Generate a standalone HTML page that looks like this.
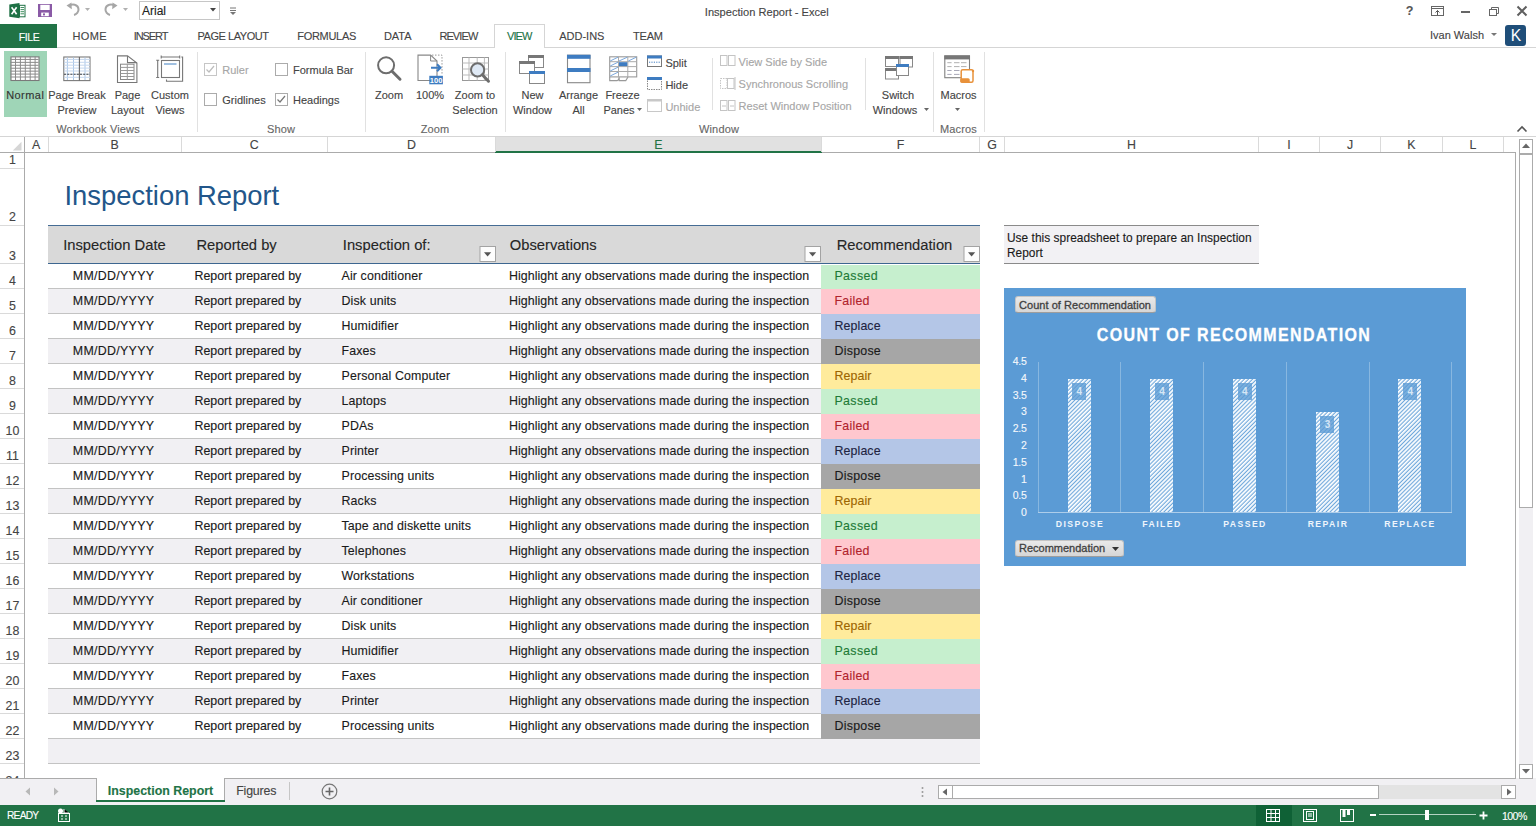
<!DOCTYPE html><html><head><meta charset="utf-8"><style>
html,body{margin:0;padding:0}
body{width:1536px;height:826px;position:relative;overflow:hidden;background:#fff;font-family:"Liberation Sans",sans-serif}
.t{position:absolute;white-space:nowrap;-webkit-text-stroke:0.12px currentColor}
.r{position:absolute}
</style></head><body>
<svg class="r" style="left:8px;top:2px" width="20" height="18" viewBox="0 0 20 18"><path d="M1.3 2.6 L11.5 1 L11.5 16.2 L1.3 14.8 Z" fill="#1e7145"/><rect x="11.5" y="3.3" width="5.5" height="11.5" fill="#fff" stroke="#1e7145" stroke-width="1"/><path d="M12.5 5.5h3.5M12.5 7.6h3.5M12.5 9.7h3.5M12.5 11.8h3.5" stroke="#3f8f5f" stroke-width="1"/><path d="M3.6 5.2L8.6 12.3M8.6 5.2L3.6 12.3" stroke="#fff" stroke-width="1.6"/></svg>
<svg class="r" style="left:37px;top:3px" width="16" height="15" viewBox="0 0 16 15"><rect x="1" y="1" width="14" height="13" fill="#8a5aa6"/><rect x="3.3" y="1.8" width="9.4" height="5.2" fill="#fff"/><rect x="4.2" y="9.6" width="7.6" height="3.6" fill="#fff"/><rect x="6" y="10.4" width="2" height="2" fill="#8a5aa6"/></svg>
<svg class="r" style="left:64px;top:0px" width="18" height="18" viewBox="0 0 18 18"><path d="M5 6 C8 3.5, 14 4.2, 14.5 9 C14.8 12, 12.5 14.5, 10 15" fill="none" stroke="#a6a6a6" stroke-width="2"/><path d="M2.5 5.5 L7.5 2.5 L7.8 9.2 Z" fill="#a6a6a6"/></svg>
<svg class="r" style="left:85px;top:8px" width="6" height="4" viewBox="0 0 6 4"><path d="M0 0h5l-2.5 3z" fill="#b0b0b0"/></svg>
<svg class="r" style="left:102px;top:0px" width="18" height="18" viewBox="0 0 18 18"><path d="M13 6 C10 3.5, 4 4.2, 3.5 9 C3.2 12, 5.5 14.5, 8 15" fill="none" stroke="#a6a6a6" stroke-width="2"/><path d="M15.5 5.5 L10.5 2.5 L10.2 9.2 Z" fill="#a6a6a6"/></svg>
<svg class="r" style="left:123px;top:8px" width="6" height="4" viewBox="0 0 6 4"><path d="M0 0h5l-2.5 3z" fill="#b0b0b0"/></svg>
<div class="r" style="left:139px;top:1px;width:81px;height:19px;border:1px solid #c6c6c6;background:#fff;box-sizing:border-box"></div>
<div class="t" style="left:142.00px;top:2.84px;font-size:12px;line-height:16px;color:#222;">Arial</div>
<svg class="r" style="left:210px;top:8px" width="7" height="4" viewBox="0 0 7 4"><path d="M0 0h6l-3 3.5z" fill="#444"/></svg>
<svg class="r" style="left:229px;top:6px" width="8" height="10" viewBox="0 0 8 10"><path d="M1 2h6M1 4.5h6" stroke="#777" stroke-width="1"/><path d="M1 6h6l-3 3z" fill="#777"/></svg>
<div class="t" style="left:566.80px;width:400px;text-align:center;top:5.25px;font-size:11.1px;line-height:14px;color:#444;">Inspection Report - Excel</div>
<div class="t" style="left:1209.50px;width:400px;text-align:center;top:2.87px;font-size:12.5px;line-height:16px;color:#555;font-weight:700;">?</div>
<svg class="r" style="left:1430px;top:5px" width="15" height="11" viewBox="0 0 15 11"><rect x="1.5" y="1.5" width="12" height="9" fill="none" stroke="#666" stroke-width="1"/><path d="M1.5 3.5h12" stroke="#666"/><path d="M7.5 10V5.5M5.5 7.5l2-2 2 2" stroke="#555" fill="none" stroke-width="1"/></svg>
<div class="r" style="left:1461px;top:11px;width:9px;height:2px;background:#666"></div>
<svg class="r" style="left:1488px;top:5px" width="12" height="12" viewBox="0 0 12 12"><rect x="1.5" y="4.5" width="7" height="6" fill="none" stroke="#666"/><path d="M3.5 4.5V2.5h7v6h-2" fill="none" stroke="#666"/></svg>
<svg class="r" style="left:1516px;top:5px" width="12" height="12" viewBox="0 0 12 12"><path d="M1.5 1.5l9 9M10.5 1.5l-9 9" stroke="#5f5f5f" stroke-width="2"/></svg>
<div class="r" style="left:0px;top:47px;width:1536px;height:1px;background:#d5d5d5"></div>
<div class="r" style="left:0px;top:24px;width:57px;height:24px;background:#217346"></div>
<div class="t" style="left:-171.00px;width:400px;text-align:center;top:29.56px;font-size:10.5px;line-height:14px;color:#fff;letter-spacing:-0.4px">FILE</div>
<div class="t" style="left:72.60px;top:29.19px;font-size:11px;line-height:14px;color:#444;letter-spacing:0.3px">HOME</div>
<div class="t" style="left:133.80px;top:29.19px;font-size:11px;line-height:14px;color:#444;letter-spacing:-1.1px">INSERT</div>
<div class="t" style="left:197.50px;top:29.19px;font-size:11px;line-height:14px;color:#444;letter-spacing:-0.45px">PAGE LAYOUT</div>
<div class="t" style="left:297.20px;top:29.19px;font-size:11px;line-height:14px;color:#444;letter-spacing:-0.28px">FORMULAS</div>
<div class="t" style="left:383.90px;top:29.19px;font-size:11px;line-height:14px;color:#444;letter-spacing:0px">DATA</div>
<div class="t" style="left:559.20px;top:29.19px;font-size:11px;line-height:14px;color:#444;letter-spacing:0px">ADD-INS</div>
<div class="t" style="left:633.00px;top:29.19px;font-size:11px;line-height:14px;color:#444;letter-spacing:-0.2px">TEAM</div>
<div class="t" style="left:439.40px;top:29.19px;font-size:11px;line-height:14px;color:#444;letter-spacing:-0.9px">REVIEW</div>
<div class="r" style="left:494px;top:24px;width:51px;height:24px;background:#fff;border:1px solid #d5d5d5;border-bottom:none;box-sizing:border-box"></div>
<div class="t" style="left:319.30px;width:400px;text-align:center;top:29.19px;font-size:11px;line-height:14px;color:#217346;letter-spacing:-0.9px">VIEW</div>
<div class="t" style="left:1430.00px;top:28.19px;font-size:11px;line-height:14px;color:#444;">Ivan Walsh</div>
<svg class="r" style="left:1491px;top:33px" width="7" height="4" viewBox="0 0 7 4"><path d="M0 0h6l-3 3z" fill="#777"/></svg>
<div class="r" style="left:1505px;top:25px;width:21px;height:21px;background:#1f4e79;border-radius:3px"></div>
<div class="t" style="left:1315.60px;width:400px;text-align:center;top:25.41px;font-size:17px;line-height:22px;color:#fff;-webkit-text-stroke:0;transform:scaleX(0.92)">K</div>
<div class="r" style="left:0px;top:136px;width:1536px;height:1px;background:#d5d5d5"></div>
<div class="r" style="left:197px;top:52px;width:1px;height:80px;background:#e1e1e1"></div>
<div class="r" style="left:365px;top:52px;width:1px;height:80px;background:#e1e1e1"></div>
<div class="r" style="left:505px;top:52px;width:1px;height:80px;background:#e1e1e1"></div>
<div class="r" style="left:933px;top:52px;width:1px;height:80px;background:#e1e1e1"></div>
<div class="r" style="left:984px;top:52px;width:1px;height:80px;background:#e1e1e1"></div>
<div class="r" style="left:712px;top:58px;width:1px;height:52px;background:#e1e1e1"></div>
<div class="r" style="left:865px;top:58px;width:1px;height:52px;background:#e1e1e1"></div>
<div class="t" style="left:-102.00px;width:400px;text-align:center;top:122.19px;font-size:11px;line-height:14px;color:#666;letter-spacing:0.15px">Workbook Views</div>
<div class="t" style="left:81.00px;width:400px;text-align:center;top:122.19px;font-size:11px;line-height:14px;color:#666;letter-spacing:0.15px">Show</div>
<div class="t" style="left:235.00px;width:400px;text-align:center;top:122.19px;font-size:11px;line-height:14px;color:#666;letter-spacing:0.15px">Zoom</div>
<div class="t" style="left:519.00px;width:400px;text-align:center;top:122.19px;font-size:11px;line-height:14px;color:#666;letter-spacing:0.15px">Window</div>
<div class="t" style="left:758.50px;width:400px;text-align:center;top:122.19px;font-size:11px;line-height:14px;color:#666;letter-spacing:0.15px">Macros</div>
<svg class="r" style="left:1516px;top:125px" width="12" height="8" viewBox="0 0 12 8"><path d="M1.5 6.5L6 2l4.5 4.5" fill="none" stroke="#555" stroke-width="1.6"/></svg>
<div class="r" style="left:4px;top:51px;width:43px;height:66px;background:#9fd5b7"></div>
<div class="t" style="left:-174.80px;width:400px;text-align:center;top:87.79px;font-size:11px;line-height:14px;color:#333;letter-spacing:0.45px">Normal</div>
<div class="t" style="left:-123.00px;width:400px;text-align:center;top:87.79px;font-size:11px;line-height:14px;color:#444;">Page Break</div>
<div class="t" style="left:-123.00px;width:400px;text-align:center;top:102.89px;font-size:11px;line-height:14px;color:#444;">Preview</div>
<div class="t" style="left:-72.50px;width:400px;text-align:center;top:87.79px;font-size:11px;line-height:14px;color:#444;">Page</div>
<div class="t" style="left:-72.50px;width:400px;text-align:center;top:102.89px;font-size:11px;line-height:14px;color:#444;">Layout</div>
<div class="t" style="left:-30.00px;width:400px;text-align:center;top:87.79px;font-size:11px;line-height:14px;color:#444;">Custom</div>
<div class="t" style="left:-30.00px;width:400px;text-align:center;top:102.89px;font-size:11px;line-height:14px;color:#444;">Views</div>
<svg class="r" style="left:10px;top:56px" width="30" height="26" viewBox="0 0 30 26"><rect x="1" y="0.9" width="28" height="23.6" fill="#fff" stroke="#7a7a7a" stroke-width="1.1"/><path d="M5.50 0.5V24" stroke="#8a8a8a" stroke-width="1"/><path d="M10.40 0.5V24" stroke="#8a8a8a" stroke-width="1"/><path d="M15.30 0.5V24" stroke="#8a8a8a" stroke-width="1"/><path d="M20.20 0.5V24" stroke="#8a8a8a" stroke-width="1"/><path d="M25.10 0.5V24" stroke="#8a8a8a" stroke-width="1"/><path d="M0.5 3.43H28.5" stroke="#8a8a8a" stroke-width="1"/><path d="M0.5 6.36H28.5" stroke="#8a8a8a" stroke-width="1"/><path d="M0.5 9.29H28.5" stroke="#8a8a8a" stroke-width="1"/><path d="M0.5 12.22H28.5" stroke="#8a8a8a" stroke-width="1"/><path d="M0.5 15.15H28.5" stroke="#8a8a8a" stroke-width="1"/><path d="M0.5 18.08H28.5" stroke="#8a8a8a" stroke-width="1"/><path d="M0.5 21.01H28.5" stroke="#8a8a8a" stroke-width="1"/></svg>
<svg class="r" style="left:63px;top:56px" width="28" height="26" viewBox="0 0 28 26"><rect x="0.8" y="1" width="26.2" height="23.6" fill="#fff" stroke="#7a7a7a" stroke-width="1.1"/><path d="M4.4 1.5V24" stroke="#a9c6e8"/><path d="M10.5 1.5V24" stroke="#a9c6e8"/><path d="M22 1.5V24" stroke="#a9c6e8"/><path d="M1 3.4H27" stroke="#c5d7ee"/><path d="M1 6.3H27" stroke="#c5d7ee"/><path d="M1 9.2H27" stroke="#c5d7ee"/><path d="M1 12.1H27" stroke="#c5d7ee"/><path d="M1 15H27" stroke="#c5d7ee"/><path d="M1 18.2H27" stroke="#c5d7ee"/><path d="M1 21.3H27" stroke="#c5d7ee"/><path d="M16.4 1V24.5" stroke="#666" stroke-width="1.1"/><path d="M1 18.3H27" stroke="#444" stroke-width="1.1" stroke-dasharray="2 1.2"/></svg>
<svg class="r" style="left:116px;top:55px" width="23" height="29" viewBox="0 0 23 29"><path d="M1.5 0.9H11.5L20.9 8V27.5H1.5Z" fill="#fff" stroke="#777" stroke-width="1.1"/><path d="M11.5 0.9V7.6H20.9" fill="none" stroke="#777" stroke-width="1.1"/><rect x="4.5" y="9.2" width="13.5" height="15.3" fill="none" stroke="#888"/><path d="M4.5 12.4h13.5M4.5 15.5h13.5M4.5 18.5h13.5M4.5 21.5h13.5M11.3 9.2v15.3" stroke="#999"/></svg>
<svg class="r" style="left:155px;top:55px" width="30" height="29" viewBox="0 0 30 29"><path d="M2.7 5.3V22.5M1.2 5.3h3M1.2 22.5h3" stroke="#777" stroke-width="1.1"/><path d="M6.2 2H24.7M6.2 0.5v3M24.7 0.5v3" stroke="#777" stroke-width="1.1"/><rect x="6.5" y="5.5" width="18" height="17" fill="#fff" stroke="#777" stroke-width="1.1"/><path d="M9 9H21.5" stroke="#9fbfe0" stroke-width="2"/><path d="M26.3 2H27.6V26.3H11.5V24.5" fill="none" stroke="#777" stroke-width="1.1"/></svg>
<svg class="r" style="left:204px;top:63px" width="13" height="13" viewBox="0 0 13 13"><rect x="0.5" y="0.5" width="12" height="12" fill="#fff" stroke="#c6c6c6"/><path d="M2.5 6.5l2.5 2.5 5-6" fill="none" stroke="#bcbcbc" stroke-width="1.2"/></svg>
<div class="t" style="left:222.30px;top:62.99px;font-size:11px;line-height:14px;color:#a6a6a6;">Ruler</div>
<svg class="r" style="left:275px;top:63px" width="13" height="13" viewBox="0 0 13 13"><rect x="0.5" y="0.5" width="12" height="12" fill="#fff" stroke="#ababab"/></svg>
<div class="t" style="left:293.00px;top:62.99px;font-size:11px;line-height:14px;color:#444;">Formula Bar</div>
<svg class="r" style="left:204px;top:93px" width="13" height="13" viewBox="0 0 13 13"><rect x="0.5" y="0.5" width="12" height="12" fill="#fff" stroke="#ababab"/></svg>
<div class="t" style="left:222.30px;top:92.79px;font-size:11px;line-height:14px;color:#444;">Gridlines</div>
<svg class="r" style="left:275px;top:93px" width="13" height="13" viewBox="0 0 13 13"><rect x="0.5" y="0.5" width="12" height="12" fill="#fff" stroke="#ababab"/><path d="M2.5 6.5l2.5 2.5 5-6" fill="none" stroke="#777" stroke-width="1.2"/></svg>
<div class="t" style="left:293.00px;top:92.79px;font-size:11px;line-height:14px;color:#444;">Headings</div>
<div class="t" style="left:189.00px;width:400px;text-align:center;top:87.79px;font-size:11px;line-height:14px;color:#444;">Zoom</div>
<div class="t" style="left:230.00px;width:400px;text-align:center;top:87.79px;font-size:11px;line-height:14px;color:#444;">100%</div>
<div class="t" style="left:275.00px;width:400px;text-align:center;top:87.79px;font-size:11px;line-height:14px;color:#444;">Zoom to</div>
<div class="t" style="left:275.00px;width:400px;text-align:center;top:102.89px;font-size:11px;line-height:14px;color:#444;">Selection</div>
<svg class="r" style="left:375px;top:55px" width="28" height="28" viewBox="0 0 28 28"><circle cx="11.1" cy="10.3" r="8" fill="none" stroke="#6d6d6d" stroke-width="2"/><path d="M17 16.3L25 24.2" stroke="#6d6d6d" stroke-width="3" stroke-linecap="round"/></svg>
<svg class="r" style="left:416px;top:54px" width="30" height="32" viewBox="0 0 30 32"><path d="M2 1.1H14.6L21 7V26.5H2Z" fill="#fff" stroke="#888" stroke-width="1.1"/><path d="M14.6 1.1V7H21" fill="none" stroke="#888"/><path d="M16 1.1h10v18.5" fill="none" stroke="#999" stroke-dasharray="1.5 1.5"/><path d="M15 13.8h9M21 10.3l3.5 3.5-3.5 3.5" stroke="#3e7cc1" stroke-width="2" fill="none"/><rect x="13.3" y="21.8" width="13.6" height="8.5" fill="#3e7cc1"/><text x="20.1" y="28.8" font-size="7.5" font-weight="700" fill="#fff" text-anchor="middle" font-family="Liberation Sans">100</text></svg>
<svg class="r" style="left:460px;top:55px" width="32" height="30" viewBox="0 0 32 30"><rect x="2.5" y="2.5" width="26" height="23" fill="#fff" stroke="#999"/><path d="M2.5 8h26M2.5 14h26M2.5 20h26M9 2.5v23M17.2 2.5v23M24.4 2.5v23" stroke="#bbb"/><circle cx="17.6" cy="14.9" r="6.6" fill="#dfe9f5" stroke="#6d6d6d" stroke-width="2"/><path d="M22.3 19.8L28.5 26.2" stroke="#6d6d6d" stroke-width="3" stroke-linecap="round"/></svg>
<div class="t" style="left:332.50px;width:400px;text-align:center;top:87.79px;font-size:11px;line-height:14px;color:#444;">New</div>
<div class="t" style="left:332.50px;width:400px;text-align:center;top:102.89px;font-size:11px;line-height:14px;color:#444;">Window</div>
<div class="t" style="left:378.50px;width:400px;text-align:center;top:87.79px;font-size:11px;line-height:14px;color:#444;">Arrange</div>
<div class="t" style="left:378.50px;width:400px;text-align:center;top:102.89px;font-size:11px;line-height:14px;color:#444;">All</div>
<div class="t" style="left:422.50px;width:400px;text-align:center;top:87.79px;font-size:11px;line-height:14px;color:#444;">Freeze</div>
<div class="t" style="left:419.00px;width:400px;text-align:center;top:102.89px;font-size:11px;line-height:14px;color:#444;">Panes</div>
<svg class="r" style="left:637px;top:108px" width="6" height="4" viewBox="0 0 6 4"><path d="M0 0h5l-2.5 3z" fill="#666"/></svg>
<svg class="r" style="left:518px;top:54px" width="28" height="32" viewBox="0 0 28 32"><rect x="10.5" y="1.5" width="15" height="12" fill="#fff" stroke="#888"/><rect x="10" y="1" width="16" height="3" fill="#777"/><rect x="1.5" y="7.5" width="15" height="12" fill="#fff" stroke="#888"/><rect x="1" y="7" width="16" height="3" fill="#777"/><rect x="11.5" y="17.5" width="15" height="12" fill="#fff" stroke="#888"/><rect x="11" y="17" width="16" height="3" fill="#3e7cc1"/></svg>
<svg class="r" style="left:566px;top:54px" width="26" height="30" viewBox="0 0 26 30"><rect x="1.5" y="1.2" width="22.5" height="27.5" fill="#fff" stroke="#888" stroke-width="1.1"/><rect x="1" y="0.8" width="23.5" height="4" fill="#3e7cc1"/><rect x="1" y="14" width="23.5" height="4" fill="#3e7cc1"/></svg>
<svg class="r" style="left:609px;top:56px" width="29" height="26" viewBox="0 0 29 26"><rect x="0.7" y="0.8" width="27" height="20.1" fill="#fff" stroke="#999" stroke-width="1.1"/><path d="M0.7 5.7h27M0.7 10.6h27M0.7 15.5h27M9.5 0.8v20.1M18.8 0.8v20.1" stroke="#aaa"/><path d="M1.2 5L9 1.2M1.2 10L9 6.2M1.2 15L9 11.2M1.2 20L9 16.2M10 5L18.3 1.2M19.3 5L27.3 1.2" stroke="#7aa7dc"/><rect x="10" y="6.2" width="8.3" height="3.9" fill="#3e7cc1"/><path d="M0.7 20.9V24.6H8.3Q9.6 24.6 10.2 21.2M10.2 21.2V24.6H16.8L19 21" fill="none" stroke="#999" stroke-width="1.1"/></svg>
<svg class="r" style="left:647px;top:55px" width="16" height="13" viewBox="0 0 16 13"><rect x="0.5" y="1" width="14" height="10.5" fill="#fff" stroke="#777"/><rect x="0" y="0.5" width="15" height="3" fill="#3e7cc1"/><path d="M2 7.2h11" stroke="#3e7cc1" stroke-dasharray="1.2 1.2"/></svg>
<div class="t" style="left:665.40px;top:55.79px;font-size:11px;line-height:14px;color:#444;">Split</div>
<svg class="r" style="left:647px;top:77px" width="16" height="14" viewBox="0 0 16 14"><rect x="0.5" y="0.5" width="14" height="12" fill="#fff" stroke="#888" stroke-dasharray="1.5 1"/><rect x="0" y="0" width="15" height="3" fill="#3e7cc1"/></svg>
<div class="t" style="left:665.40px;top:77.79px;font-size:11px;line-height:14px;color:#444;">Hide</div>
<svg class="r" style="left:647px;top:99px" width="16" height="14" viewBox="0 0 16 14"><rect x="0.5" y="0.5" width="14" height="12" fill="#fff" stroke="#c8c8c8"/><rect x="0" y="0" width="15" height="2.5" fill="#c8c8c8"/></svg>
<div class="t" style="left:665.40px;top:99.79px;font-size:11px;line-height:14px;color:#a6a6a6;">Unhide</div>
<svg class="r" style="left:720px;top:55px" width="16" height="12" viewBox="0 0 16 12"><rect x="0.5" y="0.5" width="6.5" height="10" fill="#fff" stroke="#c4c4c4"/><rect x="8.5" y="0.5" width="6.5" height="10" fill="#fff" stroke="#c4c4c4"/></svg>
<div class="t" style="left:738.60px;top:55.19px;font-size:11px;line-height:14px;color:#a6a6a6;">View Side by Side</div>
<svg class="r" style="left:720px;top:77px" width="16" height="13" viewBox="0 0 16 13"><rect x="0.5" y="1.5" width="6.5" height="10" fill="#fff" stroke="#c4c4c4" stroke-dasharray="1.5 1"/><rect x="7.5" y="1.5" width="6.5" height="10" fill="#fff" stroke="#c4c4c4"/><path d="M15 0v13" stroke="#c4c4c4"/></svg>
<div class="t" style="left:738.60px;top:77.39px;font-size:11px;line-height:14px;color:#a6a6a6;">Synchronous Scrolling</div>
<svg class="r" style="left:720px;top:99px" width="16" height="13" viewBox="0 0 16 13"><rect x="0.5" y="1.5" width="6.5" height="10" fill="#fff" stroke="#c4c4c4"/><rect x="8.5" y="1.5" width="6.5" height="10" fill="#fff" stroke="#c4c4c4"/><path d="M2 7h4M10 7h4" stroke="#c4c4c4"/></svg>
<div class="t" style="left:738.60px;top:99.39px;font-size:11px;line-height:14px;color:#a6a6a6;">Reset Window Position</div>
<div class="t" style="left:698.00px;width:400px;text-align:center;top:87.79px;font-size:11px;line-height:14px;color:#444;">Switch</div>
<div class="t" style="left:695.00px;width:400px;text-align:center;top:102.89px;font-size:11px;line-height:14px;color:#444;">Windows</div>
<svg class="r" style="left:924px;top:108px" width="6" height="4" viewBox="0 0 6 4"><path d="M0 0h5l-2.5 3z" fill="#666"/></svg>
<svg class="r" style="left:885px;top:55px" width="29" height="26" viewBox="0 0 29 26"><rect x="0.5" y="1.5" width="13" height="10" fill="#fff" stroke="#888"/><rect x="0" y="1" width="14" height="3" fill="#777"/><rect x="15.0" y="1.5" width="12.5" height="10.5" fill="#fff" stroke="#888"/><rect x="14.5" y="1" width="13.5" height="3" fill="#777"/><rect x="0.5" y="13.5" width="13" height="10.5" fill="#fff" stroke="#888"/><rect x="0" y="13" width="14" height="3" fill="#777"/><rect x="11.5" y="9.5" width="12" height="11" fill="#fff" stroke="#888"/><rect x="11" y="9" width="13" height="3" fill="#3e7cc1"/></svg>
<div class="t" style="left:758.50px;width:400px;text-align:center;top:87.79px;font-size:11px;line-height:14px;color:#444;">Macros</div>
<svg class="r" style="left:955px;top:108px" width="6" height="4" viewBox="0 0 6 4"><path d="M0 0h5l-2.5 3z" fill="#666"/></svg>
<svg class="r" style="left:944px;top:55px" width="32" height="29" viewBox="0 0 32 29"><rect x="0.8" y="0.9" width="24.7" height="21.8" fill="#fff" stroke="#808080" stroke-width="1.1"/><rect x="0.3" y="0.4" width="25.7" height="4" fill="#777"/><path d="M3.3 7.7h4.3M10 7.7h5.5M17 7.7h5.5" stroke="#b0b0b0" stroke-width="1"/><path d="M3.3 11.6h4.3M10 11.6h5.5M17 11.6h5.5" stroke="#b0b0b0" stroke-width="1"/><path d="M3.3 15.5h4.3M10 15.5h5.5" stroke="#a8a8b8" stroke-width="1"/><path d="M3.3 19.4h4.3M10 19.4h5.5" stroke="#a8a8b8" stroke-width="1"/><rect x="17.2" y="14.8" width="11.8" height="12.5" rx="1.5" fill="#fff" stroke="#e8913a" stroke-width="1.5"/><rect x="16.2" y="23.2" width="9.5" height="4.5" rx="1.5" fill="#e8913a"/><circle cx="29" cy="16" r="1.2" fill="#e8913a"/></svg>
<div class="r" style="left:0px;top:137px;width:1516px;height:16px;background:#fff"></div>
<div class="r" style="left:495px;top:137px;width:327px;height:16px;background:#e1e1e1"></div>
<div class="r" style="left:0px;top:152px;width:1516px;height:1px;background:#ababab"></div>
<div class="r" style="left:495px;top:151px;width:327px;height:2px;background:#217346"></div>
<div class="r" style="left:48px;top:137px;width:1px;height:15px;background:#dadada"></div>
<div class="t" style="left:-163.75px;width:400px;text-align:center;top:137.00px;font-size:12.4px;line-height:16px;color:#444;">A</div>
<div class="r" style="left:181px;top:137px;width:1px;height:15px;background:#dadada"></div>
<div class="t" style="left:-85.25px;width:400px;text-align:center;top:137.00px;font-size:12.4px;line-height:16px;color:#444;">B</div>
<div class="r" style="left:327px;top:137px;width:1px;height:15px;background:#dadada"></div>
<div class="t" style="left:54.25px;width:400px;text-align:center;top:137.00px;font-size:12.4px;line-height:16px;color:#444;">C</div>
<div class="r" style="left:495px;top:137px;width:1px;height:15px;background:#dadada"></div>
<div class="t" style="left:211.50px;width:400px;text-align:center;top:137.00px;font-size:12.4px;line-height:16px;color:#444;">D</div>
<div class="r" style="left:821px;top:137px;width:1px;height:15px;background:#dadada"></div>
<div class="t" style="left:458.50px;width:400px;text-align:center;top:137.00px;font-size:12.4px;line-height:16px;color:#217346;">E</div>
<div class="r" style="left:979px;top:137px;width:1px;height:15px;background:#dadada"></div>
<div class="t" style="left:700.50px;width:400px;text-align:center;top:137.00px;font-size:12.4px;line-height:16px;color:#444;">F</div>
<div class="r" style="left:1004px;top:137px;width:1px;height:15px;background:#dadada"></div>
<div class="t" style="left:792.00px;width:400px;text-align:center;top:137.00px;font-size:12.4px;line-height:16px;color:#444;">G</div>
<div class="r" style="left:1258px;top:137px;width:1px;height:15px;background:#dadada"></div>
<div class="t" style="left:931.50px;width:400px;text-align:center;top:137.00px;font-size:12.4px;line-height:16px;color:#444;">H</div>
<div class="r" style="left:1319px;top:137px;width:1px;height:15px;background:#dadada"></div>
<div class="t" style="left:1089.00px;width:400px;text-align:center;top:137.00px;font-size:12.4px;line-height:16px;color:#444;">I</div>
<div class="r" style="left:1380px;top:137px;width:1px;height:15px;background:#dadada"></div>
<div class="t" style="left:1150.00px;width:400px;text-align:center;top:137.00px;font-size:12.4px;line-height:16px;color:#444;">J</div>
<div class="r" style="left:1442px;top:137px;width:1px;height:15px;background:#dadada"></div>
<div class="t" style="left:1211.50px;width:400px;text-align:center;top:137.00px;font-size:12.4px;line-height:16px;color:#444;">K</div>
<div class="r" style="left:1503px;top:137px;width:1px;height:15px;background:#dadada"></div>
<div class="t" style="left:1273.00px;width:400px;text-align:center;top:137.00px;font-size:12.4px;line-height:16px;color:#444;">L</div>
<svg class="r" style="left:12px;top:141px" width="10" height="10" viewBox="0 0 10 10"><path d="M9.5 0.8V9.5H0.8Z" fill="#d6d6d6"/></svg>
<div class="r" style="left:24px;top:137px;width:1px;height:642px;background:#ababab"></div>
<div class="r" style="left:0px;top:168px;width:24px;height:1px;background:#dadada"></div>
<div class="t" style="left:-187.50px;width:400px;text-align:center;top:152.20px;font-size:12.4px;line-height:16px;color:#444;">1</div>
<div class="r" style="left:0px;top:225px;width:24px;height:1px;background:#dadada"></div>
<div class="t" style="left:-187.50px;width:400px;text-align:center;top:209.20px;font-size:12.4px;line-height:16px;color:#444;">2</div>
<div class="r" style="left:0px;top:263px;width:24px;height:1px;background:#dadada"></div>
<div class="t" style="left:-187.50px;width:400px;text-align:center;top:248.00px;font-size:12.4px;line-height:16px;color:#444;">3</div>
<div class="r" style="left:0px;top:288px;width:24px;height:1px;background:#dadada"></div>
<div class="t" style="left:-187.50px;width:400px;text-align:center;top:273.00px;font-size:12.4px;line-height:16px;color:#444;">4</div>
<div class="r" style="left:0px;top:313px;width:24px;height:1px;background:#dadada"></div>
<div class="t" style="left:-187.50px;width:400px;text-align:center;top:298.00px;font-size:12.4px;line-height:16px;color:#444;">5</div>
<div class="r" style="left:0px;top:338px;width:24px;height:1px;background:#dadada"></div>
<div class="t" style="left:-187.50px;width:400px;text-align:center;top:323.00px;font-size:12.4px;line-height:16px;color:#444;">6</div>
<div class="r" style="left:0px;top:363px;width:24px;height:1px;background:#dadada"></div>
<div class="t" style="left:-187.50px;width:400px;text-align:center;top:348.00px;font-size:12.4px;line-height:16px;color:#444;">7</div>
<div class="r" style="left:0px;top:388px;width:24px;height:1px;background:#dadada"></div>
<div class="t" style="left:-187.50px;width:400px;text-align:center;top:373.00px;font-size:12.4px;line-height:16px;color:#444;">8</div>
<div class="r" style="left:0px;top:413px;width:24px;height:1px;background:#dadada"></div>
<div class="t" style="left:-187.50px;width:400px;text-align:center;top:398.00px;font-size:12.4px;line-height:16px;color:#444;">9</div>
<div class="r" style="left:0px;top:438px;width:24px;height:1px;background:#dadada"></div>
<div class="t" style="left:-187.50px;width:400px;text-align:center;top:423.00px;font-size:12.4px;line-height:16px;color:#444;">10</div>
<div class="r" style="left:0px;top:463px;width:24px;height:1px;background:#dadada"></div>
<div class="t" style="left:-187.50px;width:400px;text-align:center;top:448.00px;font-size:12.4px;line-height:16px;color:#444;">11</div>
<div class="r" style="left:0px;top:488px;width:24px;height:1px;background:#dadada"></div>
<div class="t" style="left:-187.50px;width:400px;text-align:center;top:473.00px;font-size:12.4px;line-height:16px;color:#444;">12</div>
<div class="r" style="left:0px;top:513px;width:24px;height:1px;background:#dadada"></div>
<div class="t" style="left:-187.50px;width:400px;text-align:center;top:498.00px;font-size:12.4px;line-height:16px;color:#444;">13</div>
<div class="r" style="left:0px;top:538px;width:24px;height:1px;background:#dadada"></div>
<div class="t" style="left:-187.50px;width:400px;text-align:center;top:523.00px;font-size:12.4px;line-height:16px;color:#444;">14</div>
<div class="r" style="left:0px;top:563px;width:24px;height:1px;background:#dadada"></div>
<div class="t" style="left:-187.50px;width:400px;text-align:center;top:548.00px;font-size:12.4px;line-height:16px;color:#444;">15</div>
<div class="r" style="left:0px;top:588px;width:24px;height:1px;background:#dadada"></div>
<div class="t" style="left:-187.50px;width:400px;text-align:center;top:573.00px;font-size:12.4px;line-height:16px;color:#444;">16</div>
<div class="r" style="left:0px;top:613px;width:24px;height:1px;background:#dadada"></div>
<div class="t" style="left:-187.50px;width:400px;text-align:center;top:598.00px;font-size:12.4px;line-height:16px;color:#444;">17</div>
<div class="r" style="left:0px;top:638px;width:24px;height:1px;background:#dadada"></div>
<div class="t" style="left:-187.50px;width:400px;text-align:center;top:623.00px;font-size:12.4px;line-height:16px;color:#444;">18</div>
<div class="r" style="left:0px;top:663px;width:24px;height:1px;background:#dadada"></div>
<div class="t" style="left:-187.50px;width:400px;text-align:center;top:648.00px;font-size:12.4px;line-height:16px;color:#444;">19</div>
<div class="r" style="left:0px;top:688px;width:24px;height:1px;background:#dadada"></div>
<div class="t" style="left:-187.50px;width:400px;text-align:center;top:673.00px;font-size:12.4px;line-height:16px;color:#444;">20</div>
<div class="r" style="left:0px;top:713px;width:24px;height:1px;background:#dadada"></div>
<div class="t" style="left:-187.50px;width:400px;text-align:center;top:698.00px;font-size:12.4px;line-height:16px;color:#444;">21</div>
<div class="r" style="left:0px;top:738px;width:24px;height:1px;background:#dadada"></div>
<div class="t" style="left:-187.50px;width:400px;text-align:center;top:723.00px;font-size:12.4px;line-height:16px;color:#444;">22</div>
<div class="r" style="left:0px;top:763px;width:24px;height:1px;background:#dadada"></div>
<div class="t" style="left:-187.50px;width:400px;text-align:center;top:748.00px;font-size:12.4px;line-height:16px;color:#444;">23</div>
<div class="t" style="left:-187.50px;width:400px;text-align:center;top:773.00px;font-size:12.4px;line-height:16px;color:#444;">24</div>
<div class="t" style="left:64.50px;top:178.01px;font-size:27.4px;line-height:36px;color:#22568a;-webkit-text-stroke:0">Inspection Report</div>
<div class="r" style="left:48px;top:225px;width:932px;height:39px;background:#d9d9d9"></div>
<div class="r" style="left:48px;top:225px;width:932px;height:1px;background:#456c94"></div>
<div class="r" style="left:48px;top:263px;width:932px;height:1px;background:#3d6690"></div>
<div class="t" style="left:63.20px;top:236.09px;font-size:14.75px;line-height:19px;color:#262626;">Inspection Date</div>
<div class="t" style="left:196.40px;top:236.09px;font-size:14.75px;line-height:19px;color:#262626;">Reported by</div>
<div class="t" style="left:342.80px;top:236.09px;font-size:14.75px;line-height:19px;color:#262626;">Inspection of:</div>
<div class="t" style="left:509.80px;top:236.09px;font-size:14.75px;line-height:19px;color:#262626;">Observations</div>
<div class="t" style="left:836.70px;top:236.09px;font-size:14.75px;line-height:19px;color:#262626;">Recommendation</div>
<svg class="r" style="left:479px;top:246px" width="17" height="17" viewBox="0 0 17 17"><rect x="1" y="0.5" width="15.5" height="15" fill="#fdfdfd" stroke="#a3a3a3"/><path d="M5 6.2h7.2l-3.6 4.4z" fill="#555"/></svg>
<svg class="r" style="left:804px;top:246px" width="17" height="17" viewBox="0 0 17 17"><rect x="1" y="0.5" width="15.5" height="15" fill="#fdfdfd" stroke="#a3a3a3"/><path d="M5 6.2h7.2l-3.6 4.4z" fill="#555"/></svg>
<svg class="r" style="left:963px;top:246px" width="17" height="17" viewBox="0 0 17 17"><rect x="1" y="0.5" width="15.5" height="15" fill="#fdfdfd" stroke="#a3a3a3"/><path d="M5 6.2h7.2l-3.6 4.4z" fill="#555"/></svg>
<div class="r" style="left:48px;top:265px;width:932px;height:25px;background:#fff"></div>
<div class="r" style="left:48px;top:289px;width:932px;height:25px;background:#f1f0f3"></div>
<div class="r" style="left:48px;top:314px;width:932px;height:25px;background:#fff"></div>
<div class="r" style="left:48px;top:339px;width:932px;height:25px;background:#f1f0f3"></div>
<div class="r" style="left:48px;top:364px;width:932px;height:25px;background:#fff"></div>
<div class="r" style="left:48px;top:389px;width:932px;height:25px;background:#f1f0f3"></div>
<div class="r" style="left:48px;top:414px;width:932px;height:25px;background:#fff"></div>
<div class="r" style="left:48px;top:439px;width:932px;height:25px;background:#f1f0f3"></div>
<div class="r" style="left:48px;top:464px;width:932px;height:25px;background:#fff"></div>
<div class="r" style="left:48px;top:489px;width:932px;height:25px;background:#f1f0f3"></div>
<div class="r" style="left:48px;top:514px;width:932px;height:25px;background:#fff"></div>
<div class="r" style="left:48px;top:539px;width:932px;height:25px;background:#f1f0f3"></div>
<div class="r" style="left:48px;top:564px;width:932px;height:25px;background:#fff"></div>
<div class="r" style="left:48px;top:589px;width:932px;height:25px;background:#f1f0f3"></div>
<div class="r" style="left:48px;top:614px;width:932px;height:25px;background:#fff"></div>
<div class="r" style="left:48px;top:639px;width:932px;height:25px;background:#f1f0f3"></div>
<div class="r" style="left:48px;top:664px;width:932px;height:25px;background:#fff"></div>
<div class="r" style="left:48px;top:689px;width:932px;height:25px;background:#f1f0f3"></div>
<div class="r" style="left:48px;top:714px;width:932px;height:25px;background:#fff"></div>
<div class="r" style="left:48px;top:739px;width:932px;height:25px;background:#f1f0f3"></div>
<div class="r" style="left:48px;top:288px;width:932px;height:1px;background:#c3c3c3"></div>
<div class="r" style="left:48px;top:313px;width:932px;height:1px;background:#c3c3c3"></div>
<div class="r" style="left:48px;top:338px;width:932px;height:1px;background:#c3c3c3"></div>
<div class="r" style="left:48px;top:363px;width:932px;height:1px;background:#c3c3c3"></div>
<div class="r" style="left:48px;top:388px;width:932px;height:1px;background:#c3c3c3"></div>
<div class="r" style="left:48px;top:413px;width:932px;height:1px;background:#c3c3c3"></div>
<div class="r" style="left:48px;top:438px;width:932px;height:1px;background:#c3c3c3"></div>
<div class="r" style="left:48px;top:463px;width:932px;height:1px;background:#c3c3c3"></div>
<div class="r" style="left:48px;top:488px;width:932px;height:1px;background:#c3c3c3"></div>
<div class="r" style="left:48px;top:513px;width:932px;height:1px;background:#c3c3c3"></div>
<div class="r" style="left:48px;top:538px;width:932px;height:1px;background:#c3c3c3"></div>
<div class="r" style="left:48px;top:563px;width:932px;height:1px;background:#c3c3c3"></div>
<div class="r" style="left:48px;top:588px;width:932px;height:1px;background:#c3c3c3"></div>
<div class="r" style="left:48px;top:613px;width:932px;height:1px;background:#c3c3c3"></div>
<div class="r" style="left:48px;top:638px;width:932px;height:1px;background:#c3c3c3"></div>
<div class="r" style="left:48px;top:663px;width:932px;height:1px;background:#c3c3c3"></div>
<div class="r" style="left:48px;top:688px;width:932px;height:1px;background:#c3c3c3"></div>
<div class="r" style="left:48px;top:713px;width:932px;height:1px;background:#c3c3c3"></div>
<div class="r" style="left:48px;top:738px;width:932px;height:1px;background:#c3c3c3"></div>
<div class="r" style="left:48px;top:763px;width:932px;height:1px;background:#c3c3c3"></div>
<div class="r" style="left:821px;top:265px;width:159px;height:24px;background:#c6efce"></div>
<div class="t" style="left:72.80px;top:268.00px;font-size:12.4px;line-height:16px;color:#1a1a1a;letter-spacing:0.3px">MM/DD/YYYY</div>
<div class="t" style="left:194.50px;top:268.00px;font-size:12.4px;line-height:16px;color:#1a1a1a;">Report prepared by</div>
<div class="t" style="left:341.50px;top:268.00px;font-size:12.4px;line-height:16px;color:#1a1a1a;letter-spacing:0.12px">Air conditioner</div>
<div class="t" style="left:509.00px;top:268.00px;font-size:12.4px;line-height:16px;color:#1a1a1a;letter-spacing:0.05px">Highlight any observations made during the inspection</div>
<div class="t" style="left:834.50px;top:268.00px;font-size:12.4px;line-height:16px;color:#1e7a36;letter-spacing:0.35px">Passed</div>
<div class="r" style="left:821px;top:289px;width:159px;height:25px;background:#ffc7ce"></div>
<div class="t" style="left:72.80px;top:293.00px;font-size:12.4px;line-height:16px;color:#1a1a1a;letter-spacing:0.3px">MM/DD/YYYY</div>
<div class="t" style="left:194.50px;top:293.00px;font-size:12.4px;line-height:16px;color:#1a1a1a;">Report prepared by</div>
<div class="t" style="left:341.50px;top:293.00px;font-size:12.4px;line-height:16px;color:#1a1a1a;letter-spacing:0.12px">Disk units</div>
<div class="t" style="left:509.00px;top:293.00px;font-size:12.4px;line-height:16px;color:#1a1a1a;letter-spacing:0.05px">Highlight any observations made during the inspection</div>
<div class="t" style="left:834.50px;top:293.00px;font-size:12.4px;line-height:16px;color:#b0222c;letter-spacing:0.25px">Failed</div>
<div class="r" style="left:821px;top:314px;width:159px;height:25px;background:#b4c6e7"></div>
<div class="t" style="left:72.80px;top:318.00px;font-size:12.4px;line-height:16px;color:#1a1a1a;letter-spacing:0.3px">MM/DD/YYYY</div>
<div class="t" style="left:194.50px;top:318.00px;font-size:12.4px;line-height:16px;color:#1a1a1a;">Report prepared by</div>
<div class="t" style="left:341.50px;top:318.00px;font-size:12.4px;line-height:16px;color:#1a1a1a;letter-spacing:0.12px">Humidifier</div>
<div class="t" style="left:509.00px;top:318.00px;font-size:12.4px;line-height:16px;color:#1a1a1a;letter-spacing:0.05px">Highlight any observations made during the inspection</div>
<div class="t" style="left:834.50px;top:318.00px;font-size:12.4px;line-height:16px;color:#20233f;letter-spacing:0.1px">Replace</div>
<div class="r" style="left:821px;top:339px;width:159px;height:25px;background:#a6a6a6"></div>
<div class="t" style="left:72.80px;top:343.00px;font-size:12.4px;line-height:16px;color:#1a1a1a;letter-spacing:0.3px">MM/DD/YYYY</div>
<div class="t" style="left:194.50px;top:343.00px;font-size:12.4px;line-height:16px;color:#1a1a1a;">Report prepared by</div>
<div class="t" style="left:341.50px;top:343.00px;font-size:12.4px;line-height:16px;color:#1a1a1a;letter-spacing:0.12px">Faxes</div>
<div class="t" style="left:509.00px;top:343.00px;font-size:12.4px;line-height:16px;color:#1a1a1a;letter-spacing:0.05px">Highlight any observations made during the inspection</div>
<div class="t" style="left:834.50px;top:343.00px;font-size:12.4px;line-height:16px;color:#1a1a1a;letter-spacing:0.25px">Dispose</div>
<div class="r" style="left:821px;top:364px;width:159px;height:25px;background:#ffeb9c"></div>
<div class="t" style="left:72.80px;top:368.00px;font-size:12.4px;line-height:16px;color:#1a1a1a;letter-spacing:0.3px">MM/DD/YYYY</div>
<div class="t" style="left:194.50px;top:368.00px;font-size:12.4px;line-height:16px;color:#1a1a1a;">Report prepared by</div>
<div class="t" style="left:341.50px;top:368.00px;font-size:12.4px;line-height:16px;color:#1a1a1a;letter-spacing:0.12px">Personal Computer</div>
<div class="t" style="left:509.00px;top:368.00px;font-size:12.4px;line-height:16px;color:#1a1a1a;letter-spacing:0.05px">Highlight any observations made during the inspection</div>
<div class="t" style="left:834.50px;top:368.00px;font-size:12.4px;line-height:16px;color:#9c6500;letter-spacing:0.1px">Repair</div>
<div class="r" style="left:821px;top:389px;width:159px;height:25px;background:#c6efce"></div>
<div class="t" style="left:72.80px;top:393.00px;font-size:12.4px;line-height:16px;color:#1a1a1a;letter-spacing:0.3px">MM/DD/YYYY</div>
<div class="t" style="left:194.50px;top:393.00px;font-size:12.4px;line-height:16px;color:#1a1a1a;">Report prepared by</div>
<div class="t" style="left:341.50px;top:393.00px;font-size:12.4px;line-height:16px;color:#1a1a1a;letter-spacing:0.12px">Laptops</div>
<div class="t" style="left:509.00px;top:393.00px;font-size:12.4px;line-height:16px;color:#1a1a1a;letter-spacing:0.05px">Highlight any observations made during the inspection</div>
<div class="t" style="left:834.50px;top:393.00px;font-size:12.4px;line-height:16px;color:#1e7a36;letter-spacing:0.35px">Passed</div>
<div class="r" style="left:821px;top:414px;width:159px;height:25px;background:#ffc7ce"></div>
<div class="t" style="left:72.80px;top:418.00px;font-size:12.4px;line-height:16px;color:#1a1a1a;letter-spacing:0.3px">MM/DD/YYYY</div>
<div class="t" style="left:194.50px;top:418.00px;font-size:12.4px;line-height:16px;color:#1a1a1a;">Report prepared by</div>
<div class="t" style="left:341.50px;top:418.00px;font-size:12.4px;line-height:16px;color:#1a1a1a;letter-spacing:0.12px">PDAs</div>
<div class="t" style="left:509.00px;top:418.00px;font-size:12.4px;line-height:16px;color:#1a1a1a;letter-spacing:0.05px">Highlight any observations made during the inspection</div>
<div class="t" style="left:834.50px;top:418.00px;font-size:12.4px;line-height:16px;color:#b0222c;letter-spacing:0.25px">Failed</div>
<div class="r" style="left:821px;top:439px;width:159px;height:25px;background:#b4c6e7"></div>
<div class="t" style="left:72.80px;top:443.00px;font-size:12.4px;line-height:16px;color:#1a1a1a;letter-spacing:0.3px">MM/DD/YYYY</div>
<div class="t" style="left:194.50px;top:443.00px;font-size:12.4px;line-height:16px;color:#1a1a1a;">Report prepared by</div>
<div class="t" style="left:341.50px;top:443.00px;font-size:12.4px;line-height:16px;color:#1a1a1a;letter-spacing:0.12px">Printer</div>
<div class="t" style="left:509.00px;top:443.00px;font-size:12.4px;line-height:16px;color:#1a1a1a;letter-spacing:0.05px">Highlight any observations made during the inspection</div>
<div class="t" style="left:834.50px;top:443.00px;font-size:12.4px;line-height:16px;color:#20233f;letter-spacing:0.1px">Replace</div>
<div class="r" style="left:821px;top:464px;width:159px;height:25px;background:#a6a6a6"></div>
<div class="t" style="left:72.80px;top:468.00px;font-size:12.4px;line-height:16px;color:#1a1a1a;letter-spacing:0.3px">MM/DD/YYYY</div>
<div class="t" style="left:194.50px;top:468.00px;font-size:12.4px;line-height:16px;color:#1a1a1a;">Report prepared by</div>
<div class="t" style="left:341.50px;top:468.00px;font-size:12.4px;line-height:16px;color:#1a1a1a;letter-spacing:0.12px">Processing units</div>
<div class="t" style="left:509.00px;top:468.00px;font-size:12.4px;line-height:16px;color:#1a1a1a;letter-spacing:0.05px">Highlight any observations made during the inspection</div>
<div class="t" style="left:834.50px;top:468.00px;font-size:12.4px;line-height:16px;color:#1a1a1a;letter-spacing:0.25px">Dispose</div>
<div class="r" style="left:821px;top:489px;width:159px;height:25px;background:#ffeb9c"></div>
<div class="t" style="left:72.80px;top:493.00px;font-size:12.4px;line-height:16px;color:#1a1a1a;letter-spacing:0.3px">MM/DD/YYYY</div>
<div class="t" style="left:194.50px;top:493.00px;font-size:12.4px;line-height:16px;color:#1a1a1a;">Report prepared by</div>
<div class="t" style="left:341.50px;top:493.00px;font-size:12.4px;line-height:16px;color:#1a1a1a;letter-spacing:0.12px">Racks</div>
<div class="t" style="left:509.00px;top:493.00px;font-size:12.4px;line-height:16px;color:#1a1a1a;letter-spacing:0.05px">Highlight any observations made during the inspection</div>
<div class="t" style="left:834.50px;top:493.00px;font-size:12.4px;line-height:16px;color:#9c6500;letter-spacing:0.1px">Repair</div>
<div class="r" style="left:821px;top:514px;width:159px;height:25px;background:#c6efce"></div>
<div class="t" style="left:72.80px;top:518.00px;font-size:12.4px;line-height:16px;color:#1a1a1a;letter-spacing:0.3px">MM/DD/YYYY</div>
<div class="t" style="left:194.50px;top:518.00px;font-size:12.4px;line-height:16px;color:#1a1a1a;">Report prepared by</div>
<div class="t" style="left:341.50px;top:518.00px;font-size:12.4px;line-height:16px;color:#1a1a1a;letter-spacing:0.12px">Tape and diskette units</div>
<div class="t" style="left:509.00px;top:518.00px;font-size:12.4px;line-height:16px;color:#1a1a1a;letter-spacing:0.05px">Highlight any observations made during the inspection</div>
<div class="t" style="left:834.50px;top:518.00px;font-size:12.4px;line-height:16px;color:#1e7a36;letter-spacing:0.35px">Passed</div>
<div class="r" style="left:821px;top:539px;width:159px;height:25px;background:#ffc7ce"></div>
<div class="t" style="left:72.80px;top:543.00px;font-size:12.4px;line-height:16px;color:#1a1a1a;letter-spacing:0.3px">MM/DD/YYYY</div>
<div class="t" style="left:194.50px;top:543.00px;font-size:12.4px;line-height:16px;color:#1a1a1a;">Report prepared by</div>
<div class="t" style="left:341.50px;top:543.00px;font-size:12.4px;line-height:16px;color:#1a1a1a;letter-spacing:0.12px">Telephones</div>
<div class="t" style="left:509.00px;top:543.00px;font-size:12.4px;line-height:16px;color:#1a1a1a;letter-spacing:0.05px">Highlight any observations made during the inspection</div>
<div class="t" style="left:834.50px;top:543.00px;font-size:12.4px;line-height:16px;color:#b0222c;letter-spacing:0.25px">Failed</div>
<div class="r" style="left:821px;top:564px;width:159px;height:25px;background:#b4c6e7"></div>
<div class="t" style="left:72.80px;top:568.00px;font-size:12.4px;line-height:16px;color:#1a1a1a;letter-spacing:0.3px">MM/DD/YYYY</div>
<div class="t" style="left:194.50px;top:568.00px;font-size:12.4px;line-height:16px;color:#1a1a1a;">Report prepared by</div>
<div class="t" style="left:341.50px;top:568.00px;font-size:12.4px;line-height:16px;color:#1a1a1a;letter-spacing:0.12px">Workstations</div>
<div class="t" style="left:509.00px;top:568.00px;font-size:12.4px;line-height:16px;color:#1a1a1a;letter-spacing:0.05px">Highlight any observations made during the inspection</div>
<div class="t" style="left:834.50px;top:568.00px;font-size:12.4px;line-height:16px;color:#20233f;letter-spacing:0.1px">Replace</div>
<div class="r" style="left:821px;top:589px;width:159px;height:25px;background:#a6a6a6"></div>
<div class="t" style="left:72.80px;top:593.00px;font-size:12.4px;line-height:16px;color:#1a1a1a;letter-spacing:0.3px">MM/DD/YYYY</div>
<div class="t" style="left:194.50px;top:593.00px;font-size:12.4px;line-height:16px;color:#1a1a1a;">Report prepared by</div>
<div class="t" style="left:341.50px;top:593.00px;font-size:12.4px;line-height:16px;color:#1a1a1a;letter-spacing:0.12px">Air conditioner</div>
<div class="t" style="left:509.00px;top:593.00px;font-size:12.4px;line-height:16px;color:#1a1a1a;letter-spacing:0.05px">Highlight any observations made during the inspection</div>
<div class="t" style="left:834.50px;top:593.00px;font-size:12.4px;line-height:16px;color:#1a1a1a;letter-spacing:0.25px">Dispose</div>
<div class="r" style="left:821px;top:614px;width:159px;height:25px;background:#ffeb9c"></div>
<div class="t" style="left:72.80px;top:618.00px;font-size:12.4px;line-height:16px;color:#1a1a1a;letter-spacing:0.3px">MM/DD/YYYY</div>
<div class="t" style="left:194.50px;top:618.00px;font-size:12.4px;line-height:16px;color:#1a1a1a;">Report prepared by</div>
<div class="t" style="left:341.50px;top:618.00px;font-size:12.4px;line-height:16px;color:#1a1a1a;letter-spacing:0.12px">Disk units</div>
<div class="t" style="left:509.00px;top:618.00px;font-size:12.4px;line-height:16px;color:#1a1a1a;letter-spacing:0.05px">Highlight any observations made during the inspection</div>
<div class="t" style="left:834.50px;top:618.00px;font-size:12.4px;line-height:16px;color:#9c6500;letter-spacing:0.1px">Repair</div>
<div class="r" style="left:821px;top:639px;width:159px;height:25px;background:#c6efce"></div>
<div class="t" style="left:72.80px;top:643.00px;font-size:12.4px;line-height:16px;color:#1a1a1a;letter-spacing:0.3px">MM/DD/YYYY</div>
<div class="t" style="left:194.50px;top:643.00px;font-size:12.4px;line-height:16px;color:#1a1a1a;">Report prepared by</div>
<div class="t" style="left:341.50px;top:643.00px;font-size:12.4px;line-height:16px;color:#1a1a1a;letter-spacing:0.12px">Humidifier</div>
<div class="t" style="left:509.00px;top:643.00px;font-size:12.4px;line-height:16px;color:#1a1a1a;letter-spacing:0.05px">Highlight any observations made during the inspection</div>
<div class="t" style="left:834.50px;top:643.00px;font-size:12.4px;line-height:16px;color:#1e7a36;letter-spacing:0.35px">Passed</div>
<div class="r" style="left:821px;top:664px;width:159px;height:25px;background:#ffc7ce"></div>
<div class="t" style="left:72.80px;top:668.00px;font-size:12.4px;line-height:16px;color:#1a1a1a;letter-spacing:0.3px">MM/DD/YYYY</div>
<div class="t" style="left:194.50px;top:668.00px;font-size:12.4px;line-height:16px;color:#1a1a1a;">Report prepared by</div>
<div class="t" style="left:341.50px;top:668.00px;font-size:12.4px;line-height:16px;color:#1a1a1a;letter-spacing:0.12px">Faxes</div>
<div class="t" style="left:509.00px;top:668.00px;font-size:12.4px;line-height:16px;color:#1a1a1a;letter-spacing:0.05px">Highlight any observations made during the inspection</div>
<div class="t" style="left:834.50px;top:668.00px;font-size:12.4px;line-height:16px;color:#b0222c;letter-spacing:0.25px">Failed</div>
<div class="r" style="left:821px;top:689px;width:159px;height:25px;background:#b4c6e7"></div>
<div class="t" style="left:72.80px;top:693.00px;font-size:12.4px;line-height:16px;color:#1a1a1a;letter-spacing:0.3px">MM/DD/YYYY</div>
<div class="t" style="left:194.50px;top:693.00px;font-size:12.4px;line-height:16px;color:#1a1a1a;">Report prepared by</div>
<div class="t" style="left:341.50px;top:693.00px;font-size:12.4px;line-height:16px;color:#1a1a1a;letter-spacing:0.12px">Printer</div>
<div class="t" style="left:509.00px;top:693.00px;font-size:12.4px;line-height:16px;color:#1a1a1a;letter-spacing:0.05px">Highlight any observations made during the inspection</div>
<div class="t" style="left:834.50px;top:693.00px;font-size:12.4px;line-height:16px;color:#20233f;letter-spacing:0.1px">Replace</div>
<div class="r" style="left:821px;top:714px;width:159px;height:25px;background:#a6a6a6"></div>
<div class="t" style="left:72.80px;top:718.00px;font-size:12.4px;line-height:16px;color:#1a1a1a;letter-spacing:0.3px">MM/DD/YYYY</div>
<div class="t" style="left:194.50px;top:718.00px;font-size:12.4px;line-height:16px;color:#1a1a1a;">Report prepared by</div>
<div class="t" style="left:341.50px;top:718.00px;font-size:12.4px;line-height:16px;color:#1a1a1a;letter-spacing:0.12px">Processing units</div>
<div class="t" style="left:509.00px;top:718.00px;font-size:12.4px;line-height:16px;color:#1a1a1a;letter-spacing:0.05px">Highlight any observations made during the inspection</div>
<div class="t" style="left:834.50px;top:718.00px;font-size:12.4px;line-height:16px;color:#1a1a1a;letter-spacing:0.25px">Dispose</div>
<div class="r" style="left:1004px;top:225px;width:255px;height:39px;background:#f2f1f4;border-top:1px solid #8a8a8a;border-bottom:1px solid #8a8a8a;box-sizing:border-box"></div>
<div class="t" style="left:1007.00px;top:230.58px;font-size:11.9px;line-height:15px;color:#1a1a1a;letter-spacing:0.03px">Use this spreadsheet to prepare an Inspection</div>
<div class="t" style="left:1007.00px;top:245.88px;font-size:11.9px;line-height:15px;color:#1a1a1a;">Report</div>
<div class="r" style="left:1004px;top:288px;width:462px;height:278px;background:#5b9bd5"></div>
<div class="r" style="left:1015px;top:296px;width:141px;height:17px;background:linear-gradient(#e9e9e9,#d6d6d6);border:1px solid #c4c4c4;border-bottom-color:#9d9d9d;border-radius:3px;box-sizing:border-box"></div>
<div class="t" style="left:885.00px;width:400px;text-align:center;top:297.59px;font-size:11px;line-height:14px;color:#3f3f3f;-webkit-text-stroke:0.3px #3f3f3f;letter-spacing:0.05px">Count of Recommendation</div>
<div class="t" style="left:1033.70px;width:400px;text-align:center;top:323.53px;font-size:17.8px;line-height:23px;color:#fff;font-weight:700;letter-spacing:1.5px;transform:scaleX(0.9);-webkit-text-stroke:0.3px #fff">COUNT OF RECOMMENDATION</div>
<div class="t" style="left:626.70px;width:400px;text-align:right;top:505.16px;font-size:10.5px;line-height:14px;color:#f4f8fc;letter-spacing:-0.2px">0</div>
<div class="t" style="left:626.70px;width:400px;text-align:right;top:488.36px;font-size:10.5px;line-height:14px;color:#f4f8fc;letter-spacing:-0.2px">0.5</div>
<div class="t" style="left:626.70px;width:400px;text-align:right;top:471.56px;font-size:10.5px;line-height:14px;color:#f4f8fc;letter-spacing:-0.2px">1</div>
<div class="t" style="left:626.70px;width:400px;text-align:right;top:454.76px;font-size:10.5px;line-height:14px;color:#f4f8fc;letter-spacing:-0.2px">1.5</div>
<div class="t" style="left:626.70px;width:400px;text-align:right;top:437.96px;font-size:10.5px;line-height:14px;color:#f4f8fc;letter-spacing:-0.2px">2</div>
<div class="t" style="left:626.70px;width:400px;text-align:right;top:421.16px;font-size:10.5px;line-height:14px;color:#f4f8fc;letter-spacing:-0.2px">2.5</div>
<div class="t" style="left:626.70px;width:400px;text-align:right;top:404.36px;font-size:10.5px;line-height:14px;color:#f4f8fc;letter-spacing:-0.2px">3</div>
<div class="t" style="left:626.70px;width:400px;text-align:right;top:387.56px;font-size:10.5px;line-height:14px;color:#f4f8fc;letter-spacing:-0.2px">3.5</div>
<div class="t" style="left:626.70px;width:400px;text-align:right;top:370.76px;font-size:10.5px;line-height:14px;color:#f4f8fc;letter-spacing:-0.2px">4</div>
<div class="t" style="left:626.70px;width:400px;text-align:right;top:353.96px;font-size:10.5px;line-height:14px;color:#f4f8fc;letter-spacing:-0.2px">4.5</div>
<div class="r" style="left:1038px;top:362px;width:1px;height:150px;background:rgba(255,255,255,0.28)"></div>
<div class="r" style="left:1120px;top:362px;width:1px;height:150px;background:rgba(255,255,255,0.28)"></div>
<div class="r" style="left:1203px;top:362px;width:1px;height:150px;background:rgba(255,255,255,0.28)"></div>
<div class="r" style="left:1286px;top:362px;width:1px;height:150px;background:rgba(255,255,255,0.28)"></div>
<div class="r" style="left:1369px;top:362px;width:1px;height:150px;background:rgba(255,255,255,0.28)"></div>
<div class="r" style="left:1451px;top:362px;width:1px;height:150px;background:rgba(255,255,255,0.28)"></div>
<div class="r" style="left:1038px;top:512px;width:414px;height:1px;background:rgba(255,255,255,0.5)"></div>
<svg class="r" style="left:1068px;top:379px" width="23" height="133" viewBox="0 0 23 133"><defs><pattern id="hatch0" width="2.9" height="4" patternUnits="userSpaceOnUse" patternTransform="rotate(45)"><rect width="2.9" height="4" fill="#6ea7db"/><rect width="1.75" height="4" fill="#fff"/></pattern></defs><rect width="23" height="133" fill="url(#hatch0)"/></svg>
<div class="r" style="left:1072px;top:383px;width:14px;height:17px;background:rgba(91,155,213,0.8)"></div>
<div class="t" style="left:879.40px;width:400px;text-align:center;top:385.34px;font-size:10px;line-height:13px;color:#d6e7f6;font-weight:700;-webkit-text-stroke:0">4</div>
<div class="t" style="left:879.60px;width:400px;text-align:center;top:518.47px;font-size:9.6px;line-height:12px;color:#eef5fc;font-weight:700;letter-spacing:1.6px;transform:scaleX(0.9);-webkit-text-stroke:0">DISPOSE</div>
<svg class="r" style="left:1150px;top:379px" width="23" height="133" viewBox="0 0 23 133"><defs><pattern id="hatch1" width="2.9" height="4" patternUnits="userSpaceOnUse" patternTransform="rotate(45)"><rect width="2.9" height="4" fill="#6ea7db"/><rect width="1.75" height="4" fill="#fff"/></pattern></defs><rect width="23" height="133" fill="url(#hatch1)"/></svg>
<div class="r" style="left:1155px;top:383px;width:14px;height:17px;background:rgba(91,155,213,0.8)"></div>
<div class="t" style="left:962.10px;width:400px;text-align:center;top:385.34px;font-size:10px;line-height:13px;color:#d6e7f6;font-weight:700;-webkit-text-stroke:0">4</div>
<div class="t" style="left:962.30px;width:400px;text-align:center;top:518.47px;font-size:9.6px;line-height:12px;color:#eef5fc;font-weight:700;letter-spacing:1.6px;transform:scaleX(0.9);-webkit-text-stroke:0">FAILED</div>
<svg class="r" style="left:1233px;top:379px" width="23" height="133" viewBox="0 0 23 133"><defs><pattern id="hatch2" width="2.9" height="4" patternUnits="userSpaceOnUse" patternTransform="rotate(45)"><rect width="2.9" height="4" fill="#6ea7db"/><rect width="1.75" height="4" fill="#fff"/></pattern></defs><rect width="23" height="133" fill="url(#hatch2)"/></svg>
<div class="r" style="left:1238px;top:383px;width:14px;height:17px;background:rgba(91,155,213,0.8)"></div>
<div class="t" style="left:1044.80px;width:400px;text-align:center;top:385.34px;font-size:10px;line-height:13px;color:#d6e7f6;font-weight:700;-webkit-text-stroke:0">4</div>
<div class="t" style="left:1045.00px;width:400px;text-align:center;top:518.47px;font-size:9.6px;line-height:12px;color:#eef5fc;font-weight:700;letter-spacing:1.6px;transform:scaleX(0.9);-webkit-text-stroke:0">PASSED</div>
<svg class="r" style="left:1316px;top:412px" width="23" height="100" viewBox="0 0 23 100"><defs><pattern id="hatch3" width="2.9" height="4" patternUnits="userSpaceOnUse" patternTransform="rotate(45)"><rect width="2.9" height="4" fill="#6ea7db"/><rect width="1.75" height="4" fill="#fff"/></pattern></defs><rect width="23" height="100" fill="url(#hatch3)"/></svg>
<div class="r" style="left:1320px;top:416px;width:14px;height:17px;background:rgba(91,155,213,0.8)"></div>
<div class="t" style="left:1127.50px;width:400px;text-align:center;top:418.34px;font-size:10px;line-height:13px;color:#d6e7f6;font-weight:700;-webkit-text-stroke:0">3</div>
<div class="t" style="left:1127.70px;width:400px;text-align:center;top:518.47px;font-size:9.6px;line-height:12px;color:#eef5fc;font-weight:700;letter-spacing:1.6px;transform:scaleX(0.9);-webkit-text-stroke:0">REPAIR</div>
<svg class="r" style="left:1398px;top:379px" width="23" height="133" viewBox="0 0 23 133"><defs><pattern id="hatch4" width="2.9" height="4" patternUnits="userSpaceOnUse" patternTransform="rotate(45)"><rect width="2.9" height="4" fill="#6ea7db"/><rect width="1.75" height="4" fill="#fff"/></pattern></defs><rect width="23" height="133" fill="url(#hatch4)"/></svg>
<div class="r" style="left:1403px;top:383px;width:14px;height:17px;background:rgba(91,155,213,0.8)"></div>
<div class="t" style="left:1210.20px;width:400px;text-align:center;top:385.34px;font-size:10px;line-height:13px;color:#d6e7f6;font-weight:700;-webkit-text-stroke:0">4</div>
<div class="t" style="left:1210.40px;width:400px;text-align:center;top:518.47px;font-size:9.6px;line-height:12px;color:#eef5fc;font-weight:700;letter-spacing:1.6px;transform:scaleX(0.9);-webkit-text-stroke:0">REPLACE</div>
<div class="r" style="left:1015px;top:540px;width:109px;height:17px;background:linear-gradient(#e9e9e9,#d6d6d6);border:1px solid #c4c4c4;border-bottom-color:#9d9d9d;border-radius:3px;box-sizing:border-box"></div>
<div class="t" style="left:1019.00px;top:541.19px;font-size:11px;line-height:14px;color:#3f3f3f;-webkit-text-stroke:0.3px #3f3f3f">Recommendation</div>
<svg class="r" style="left:1112px;top:547px" width="8" height="5" viewBox="0 0 8 5"><path d="M0 0h7l-3.5 4z" fill="#333"/></svg>
<div class="r" style="left:1515px;top:153px;width:1px;height:626px;background:#ababab"></div>
<div class="r" style="left:1516px;top:137px;width:20px;height:642px;background:#fff"></div>
<div class="r" style="left:1519px;top:508px;width:14px;height:256px;background:#f1f0f3"></div>
<div class="r" style="left:1519px;top:139px;width:14px;height:15px;background:#fff;border:1px solid #ababab;box-sizing:border-box"></div>
<svg class="r" style="left:1521px;top:143px" width="10" height="6" viewBox="0 0 10 6"><path d="M1 5h8l-4-4.5z" fill="#666"/></svg>
<div class="r" style="left:1519px;top:153px;width:14px;height:355px;background:#fff;border:1px solid #ababab;border-top:2px solid #ababab;box-sizing:border-box"></div>
<div class="r" style="left:1519px;top:764px;width:14px;height:15px;background:#fff;border:1px solid #ababab;box-sizing:border-box"></div>
<svg class="r" style="left:1521px;top:768px" width="10" height="6" viewBox="0 0 10 6"><path d="M1 1h8l-4 4.5z" fill="#666"/></svg>
<div class="r" style="left:0px;top:778px;width:1536px;height:27px;background:#f1f0f3"></div>
<div class="r" style="left:0px;top:778px;width:1516px;height:1px;background:#ababab"></div>
<svg class="r" style="left:25px;top:787px" width="6" height="9" viewBox="0 0 6 9"><path d="M5 0.5v8l-4.5-4z" fill="#b8b8b8"/></svg>
<svg class="r" style="left:53px;top:787px" width="6" height="9" viewBox="0 0 6 9"><path d="M1 0.5v8l4.5-4z" fill="#b8b8b8"/></svg>
<div class="r" style="left:96px;top:778px;width:129px;height:24px;background:#fff;border-left:1px solid #ababab;border-right:1px solid #ababab;box-sizing:border-box"></div>
<div class="r" style="left:96px;top:800px;width:129px;height:2px;background:#217346"></div>
<div class="t" style="left:-39.50px;width:400px;text-align:center;top:783.30px;font-size:12.4px;line-height:16px;color:#217346;font-weight:700;">Inspection Report</div>
<div class="t" style="left:56.20px;width:400px;text-align:center;top:783.30px;font-size:12.4px;line-height:16px;color:#444;letter-spacing:-0.2px">Figures</div>
<div class="r" style="left:289px;top:782px;width:1px;height:18px;background:#c6c6c6"></div>
<svg class="r" style="left:321px;top:783px" width="17" height="17" viewBox="0 0 17 17"><circle cx="8.5" cy="8.5" r="7.3" fill="none" stroke="#777" stroke-width="1.2"/><path d="M8.5 4.5v8M4.5 8.5h8" stroke="#666" stroke-width="1.6"/></svg>
<svg class="r" style="left:920px;top:786px" width="5" height="12" viewBox="0 0 5 12"><circle cx="2.5" cy="2" r="1" fill="#999"/><circle cx="2.5" cy="6" r="1" fill="#999"/><circle cx="2.5" cy="10" r="1" fill="#999"/></svg>
<div class="r" style="left:938px;top:785px;width:578px;height:14px;background:#e3e3e3"></div>
<div class="r" style="left:938px;top:785px;width:15px;height:14px;background:#fff;border:1px solid #ababab;box-sizing:border-box"></div>
<svg class="r" style="left:942px;top:788px" width="6" height="8" viewBox="0 0 6 8"><path d="M5 0.5v7l-4.5-3.5z" fill="#666"/></svg>
<div class="r" style="left:952px;top:785px;width:427px;height:14px;background:#fff;border:1px solid #ababab;box-sizing:border-box"></div>
<div class="r" style="left:1501px;top:785px;width:15px;height:14px;background:#fff;border:1px solid #ababab;box-sizing:border-box"></div>
<svg class="r" style="left:1506px;top:788px" width="6" height="8" viewBox="0 0 6 8"><path d="M1 0.5v7l4.5-3.5z" fill="#666"/></svg>
<div class="r" style="left:1519px;top:764px;width:14px;height:15px;background:#fff;border:1px solid #ababab;box-sizing:border-box"></div>
<svg class="r" style="left:1521px;top:768px" width="10" height="6" viewBox="0 0 10 6"><path d="M1 1h8l-4 4.5z" fill="#666"/></svg>
<div class="r" style="left:0px;top:805px;width:1536px;height:21px;background:#217346"></div>
<div class="t" style="left:7.00px;top:809.17px;font-size:10.2px;line-height:13px;color:#fff;letter-spacing:-0.75px">READY</div>
<svg class="r" style="left:57px;top:808px" width="14" height="14" viewBox="0 0 14 14"><circle cx="3.5" cy="3" r="2.5" fill="#fff"/><rect x="1.5" y="5.5" width="11" height="8" fill="none" stroke="#fff"/><path d="M4 8h2M8 8h2M4 11h2M8 11h2M7 1v4h5" stroke="#fff"/></svg>
<div class="r" style="left:1256px;top:805px;width:36px;height:21px;background:#0f6136"></div>
<svg class="r" style="left:1266px;top:809px" width="15" height="13" viewBox="0 0 15 13"><rect x="0.5" y="0.5" width="13" height="12" fill="none" stroke="#fff"/><path d="M5 0.5v12M9.5 0.5v12M0.5 4.5h13M0.5 8.5h13" stroke="#fff"/></svg>
<svg class="r" style="left:1303px;top:809px" width="15" height="13" viewBox="0 0 15 13"><rect x="0.5" y="0.5" width="13" height="12" fill="none" stroke="#fff"/><rect x="3.5" y="2.5" width="7" height="8" fill="none" stroke="#fff"/><path d="M5 5h4M5 7h4" stroke="#fff"/></svg>
<svg class="r" style="left:1340px;top:809px" width="15" height="13" viewBox="0 0 15 13"><rect x="0.5" y="0.5" width="13" height="12" fill="none" stroke="#fff"/><rect x="2.5" y="1" width="3" height="7" fill="#fff"/><rect x="7" y="1" width="3" height="5" fill="#fff"/></svg>
<div class="r" style="left:1370px;top:814px;width:6px;height:2px;background:#fff"></div>
<div class="r" style="left:1379px;top:814px;width:97px;height:1px;background:#b5d3c2"></div>
<div class="r" style="left:1425px;top:810px;width:4px;height:10px;background:#fff"></div>
<svg class="r" style="left:1479px;top:811px" width="9" height="9" viewBox="0 0 9 9"><path d="M4.5 0.5v8M0.5 4.5h8" stroke="#fff" stroke-width="1.8"/></svg>
<div class="t" style="left:1502.00px;top:808.83px;font-size:10.6px;line-height:14px;color:#fff;letter-spacing:-0.6px">100%</div>
</body></html>
